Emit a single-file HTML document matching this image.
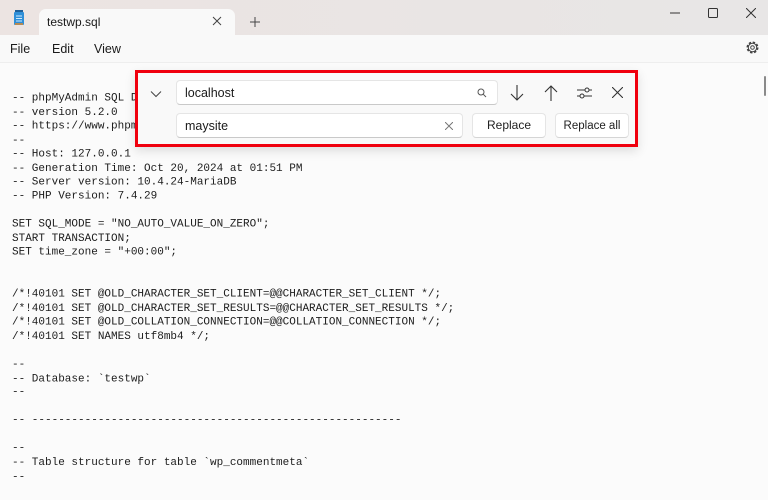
<!DOCTYPE html>
<html><head><style>
html,body{margin:0;width:768px;height:500px;overflow:hidden}
body{background:#fbfbfb;font-family:"Liberation Sans",sans-serif;position:relative}
.title{position:absolute;left:0;top:0;width:768px;height:35px;background:linear-gradient(90deg,#ece4e2,#e9e5e4 60%,#e8e6e6)}
.tab{position:absolute;left:39px;top:9px;width:196px;height:27px;background:#f9f9f9;border-radius:7px 7px 0 0}
.menu{position:absolute;left:0;top:35px;width:768px;height:27px;background:#f9f9f9;border-bottom:1px solid #eee;font-size:12.5px;color:#1a1a1a}
.menu span{position:absolute;top:7px}
.code{position:absolute;left:12px;top:92px;font-family:"Liberation Mono",monospace;font-size:11px;color:#1c1c1c;transform:scale(1,0.961);transform-origin:0 0}
.code div{height:14.58px;line-height:14.58px;white-space:pre}
.box{position:absolute;left:135px;top:70px;width:497px;height:71px;border:3px solid #f0000e;background:#f9f9f9;box-shadow:0 4px 10px rgba(0,0,0,.12)}
.inp{position:absolute;background:#fff;border:1px solid #e5e5e5;border-bottom:1px solid #c9c9c9;border-radius:4px;font-size:12.5px;color:#1a1a1a;box-sizing:border-box;padding:5px 8px}
.btn{position:absolute;background:#fff;border:1px solid #e5e5e5;border-bottom:1px solid #d5d5d5;border-radius:4px;font-size:12px;color:#222;text-align:center;line-height:23px;box-sizing:border-box}
svg{position:absolute}
</style></head><body>
<div class="title"></div>
<div class="tab"></div>
<svg style="left:13px;top:10px" width="12" height="16"><rect x="1" y="2" width="10" height="13" rx="1" fill="#2f8fd8"/><rect x="2" y="13" width="8" height="2" fill="#b58a54"/><path d="M3 6h6M3 8.5h6M3 11h6" stroke="#cfe8fb" stroke-width="1"/><rect x="2" y="0" width="8" height="2" fill="#1d5f99"/></svg>
<div style="position:absolute;left:47px;top:15px;font-size:12px;color:#1a1a1a">testwp.sql</div>
<svg style="left:212px;top:16px" width="10" height="10"><path d="M1 1L9 9M9 1L1 9" stroke="#444" stroke-width="1"/></svg>
<svg style="left:250px;top:17px" width="10" height="10"><path d="M5 0V10M0 5H10" stroke="#444" stroke-width="1"/></svg>
<svg style="left:670px;top:12px" width="10" height="2"><path d="M0 1H10" stroke="#333"/></svg>
<svg style="left:708px;top:8px" width="10" height="10"><rect x=".5" y=".5" width="9" height="9" rx="1" fill="none" stroke="#333"/></svg>
<svg style="left:746px;top:8px" width="10" height="10"><path d="M0 0L10 10M10 0L0 10" stroke="#333"/></svg>
<div class="menu"><span style="left:10px">File</span><span style="left:52px">Edit</span><span style="left:94px">View</span>
<svg style="left:745px;top:5px" width="15" height="15" viewBox="0 0 15 15"><circle cx="7.5" cy="7.5" r="5.2" fill="none" stroke="#444" stroke-width="1.6" stroke-dasharray="2.4 1.7"/><circle cx="7.5" cy="7.5" r="4.2" fill="none" stroke="#444" stroke-width="1"/><circle cx="7.5" cy="7.5" r="1.8" fill="none" stroke="#444"/></svg></div>
<div style="position:absolute;left:764px;top:76px;width:2px;height:20px;background:#8a8a8a;border-radius:1px"></div>
<div class="code"><div>-- phpMyAdmin SQL Dump</div><div>-- version 5.2.0</div><div>-- https://www.phpmyadmin.net/</div><div>--</div><div>-- Host: 127.0.0.1</div><div>-- Generation Time: Oct 20, 2024 at 01:51 PM</div><div>-- Server version: 10.4.24-MariaDB</div><div>-- PHP Version: 7.4.29</div><div> </div><div>SET SQL_MODE = "NO_AUTO_VALUE_ON_ZERO";</div><div>START TRANSACTION;</div><div>SET time_zone = "+00:00";</div><div> </div><div> </div><div>/*!40101 SET @OLD_CHARACTER_SET_CLIENT=@@CHARACTER_SET_CLIENT */;</div><div>/*!40101 SET @OLD_CHARACTER_SET_RESULTS=@@CHARACTER_SET_RESULTS */;</div><div>/*!40101 SET @OLD_COLLATION_CONNECTION=@@COLLATION_CONNECTION */;</div><div>/*!40101 SET NAMES utf8mb4 */;</div><div> </div><div>--</div><div>-- Database: `testwp`</div><div>--</div><div> </div><div>-- --------------------------------------------------------</div><div> </div><div>--</div><div>-- Table structure for table `wp_commentmeta`</div><div>--</div></div>
<div class="box">
<svg style="left:12px;top:17px" width="12" height="8"><path d="M1 1.5L6 6.5L11 1.5" fill="none" stroke="#444" stroke-width="1"/></svg>
<div class="inp" style="left:38px;top:7px;width:322px;height:25px">localhost</div>
<svg style="left:339px;top:15px" width="10" height="10"><circle cx="4" cy="4" r="3" fill="none" stroke="#555"/><path d="M6.3 6.3L9 9" stroke="#555"/></svg>
<svg style="left:372px;top:12px" width="14" height="16"><path d="M7 0V15M1 9L7 15L13 9" fill="none" stroke="#333" stroke-width="1.1"/></svg>
<svg style="left:406px;top:12px" width="14" height="16"><path d="M7 16V1M1 7L7 1L13 7" fill="none" stroke="#333" stroke-width="1.1"/></svg>
<svg style="left:439px;top:13px" width="15" height="14"><path d="M0 4H15M0 10H15" stroke="#333"/><circle cx="10" cy="4" r="2" fill="#f9f9f9" stroke="#333"/><circle cx="5" cy="10" r="2" fill="#f9f9f9" stroke="#333"/></svg>
<svg style="left:474px;top:14px" width="11" height="11"><path d="M0 0L11 11M11 0L0 11" stroke="#333" stroke-width="1.1"/></svg>
<div class="inp" style="left:38px;top:40px;width:287px;height:25px">maysite</div>
<svg style="left:307px;top:49px" width="8" height="8"><path d="M0 0L8 8M8 0L0 8" stroke="#777"/></svg>
<div class="btn" style="left:334px;top:40px;width:74px;height:25px">Replace</div>
<div class="btn" style="left:417px;top:40px;width:74px;height:25px;font-size:11.5px;line-height:24px">Replace all</div>
</div>
</body></html>
